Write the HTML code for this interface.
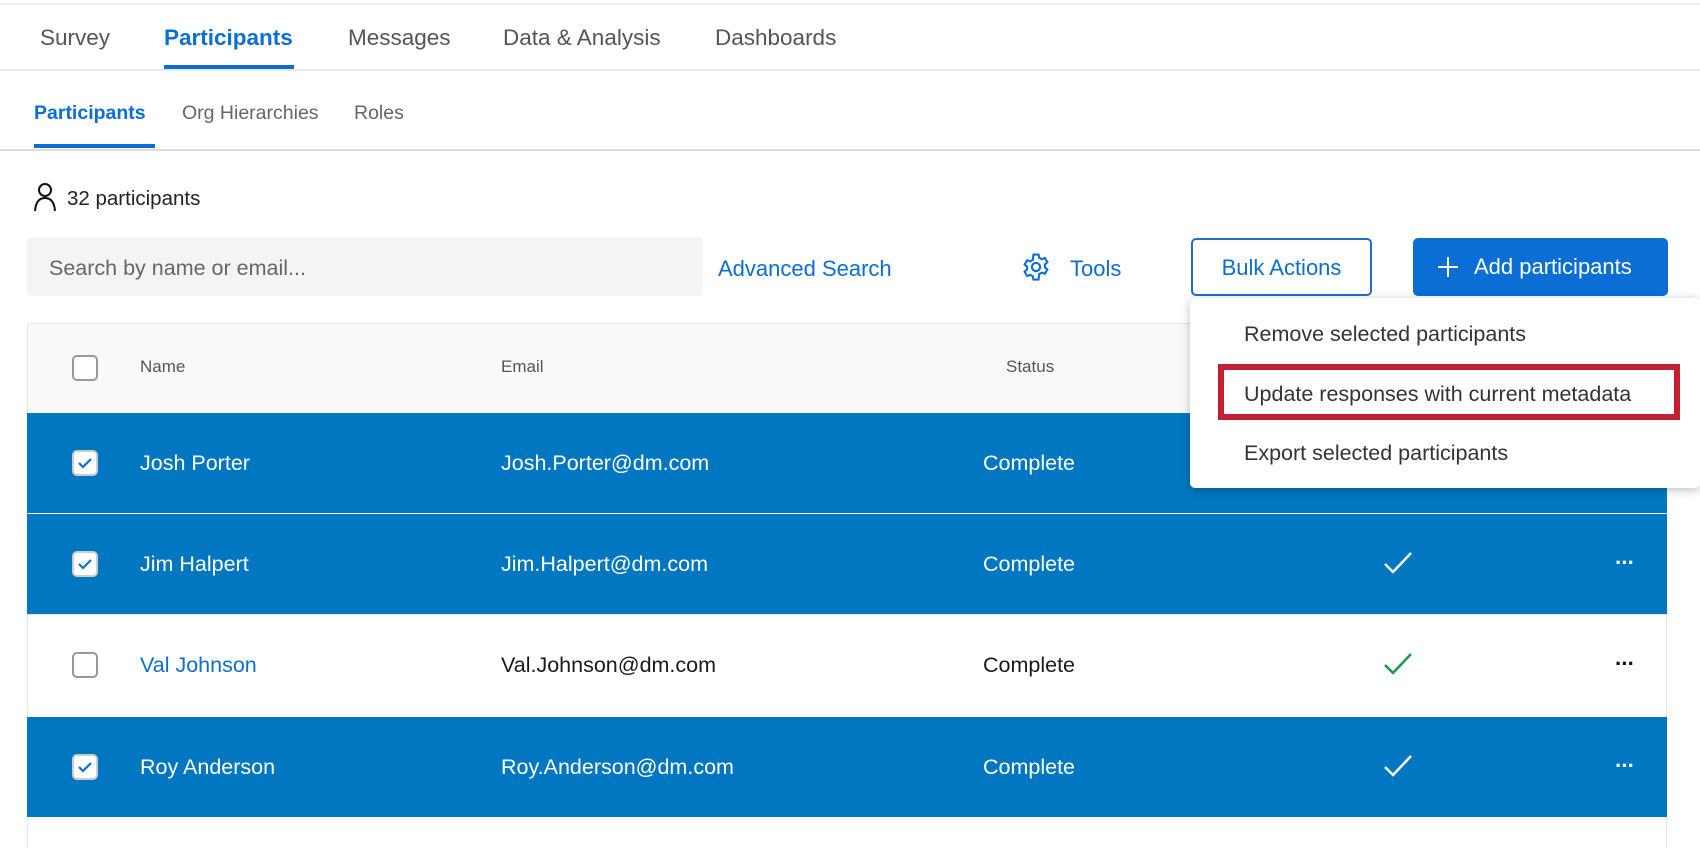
<!DOCTYPE html>
<html><head><meta charset="utf-8"><style>
*{box-sizing:border-box;margin:0;padding:0}
body{width:1700px;height:848px;overflow:hidden;background:#fff;font-family:"Liberation Sans",sans-serif;position:relative;color:#1a1a1a}
.a{position:absolute;white-space:nowrap}
.nav{font-size:22.5px;color:#555;top:25px}
.sub{font-size:19.5px;color:#666;top:102px}
.hd{font-size:17px;color:#555;top:357px}
.row{position:absolute;left:27px;width:1640px;height:100px}
.sel{background:#0077c0;color:#fff}
.cb{position:absolute;left:45px;top:37px;width:26px;height:26px;border-radius:5px;border:2px solid #999;background:#fff}
.cell{position:absolute;top:38px;font-size:21.5px}
.dots{position:absolute;left:1588px;top:36px;font-size:22px;font-weight:bold;letter-spacing:-1px}
.mi{font-size:21.5px;color:#333;left:1244px}
</style></head><body>
<div class="a" style="left:0;top:3px;width:1700px;height:2px;background:#eee"></div>
<div class="a nav" style="left:40px">Survey</div>
<div class="a nav" style="left:164px;color:#0b6ed5;font-weight:bold">Participants</div>
<div class="a nav" style="left:348px">Messages</div>
<div class="a nav" style="left:503px">Data &amp; Analysis</div>
<div class="a nav" style="left:715px">Dashboards</div>
<div class="a" style="left:164px;top:65px;width:130px;height:4px;background:#0b6ed5"></div>
<div class="a" style="left:0;top:69px;width:1700px;height:2px;background:#e8e8e8"></div>
<div class="a sub" style="left:34px;color:#0b6ed5;font-weight:bold">Participants</div>
<div class="a sub" style="left:182px">Org Hierarchies</div>
<div class="a sub" style="left:354px">Roles</div>
<div class="a" style="left:34px;top:144px;width:121px;height:4px;background:#0b6ed5"></div>
<div class="a" style="left:0;top:149px;width:1700px;height:2px;background:#ddd"></div>
<svg class="a" style="left:33px;top:182px" width="24" height="30" viewBox="0 0 24 30"><circle cx="12" cy="8" r="6" fill="none" stroke="#111" stroke-width="2"/><path d="M2 29 Q3 16 12 16 Q21 16 22 29" fill="none" stroke="#111" stroke-width="2"/></svg>
<div class="a" style="left:67px;top:187px;font-size:20.5px;color:#222">32 participants</div>
<div class="a" style="left:27px;top:237px;width:676px;height:59px;background:#f4f4f4;border-radius:4px"></div>
<div class="a" style="left:49px;top:256px;font-size:21.5px;color:#666">Search by name or email...</div>
<div class="a" style="left:718px;top:256px;font-size:22px;color:#0b6ed5">Advanced Search</div>
<svg class="a" style="left:1021px;top:252px" width="30" height="30" viewBox="0 0 24 24"><path fill="none" stroke="#0b6ed5" stroke-width="1.7" d="M10 2h4l.6 2.6 2 1.1 2.5-.9 2 3.4-2 1.8v2.2l2 1.8-2 3.4-2.5-.9-2 1.1L14 22h-4l-.6-2.6-2-1.1-2.5.9-2-3.4 2-1.8V11.8L2.9 10 4.9 6.6l2.5.9 2-1.1z"/><circle cx="12" cy="12" r="3.3" fill="none" stroke="#0b6ed5" stroke-width="1.7"/></svg>
<div class="a" style="left:1070px;top:256px;font-size:22px;color:#0b6ed5">Tools</div>
<div class="a" style="left:1191px;top:238px;width:181px;height:58px;border:2px solid #1f6fc8;border-radius:5px;text-align:center;line-height:56px;font-size:22px;color:#0b6ed5">Bulk Actions</div>
<div class="a" style="left:1413px;top:238px;width:255px;height:58px;background:#0b6ed5;border-radius:5px;color:#fff;font-size:22px;line-height:58px;padding-left:61px">Add participants</div>
<svg class="a" style="left:1437px;top:256px" width="22" height="22"><path d="M11 1v20M1 11h20" stroke="#fff" stroke-width="2"/></svg>
<div class="a" style="left:27px;top:323px;width:1640px;height:525px;border:1px solid #e6e6e6;border-bottom:none"></div>
<div class="a" style="left:28px;top:324px;width:1638px;height:88px;background:#f9f9f9"></div>
<div class="a" style="left:72px;top:355px;width:26px;height:26px;border:2px solid #999;border-radius:5px;background:#fff"></div>
<div class="a hd" style="left:140px">Name</div>
<div class="a hd" style="left:501px">Email</div>
<div class="a hd" style="left:1006px">Status</div>
<div class="row sel" style="top:413px"><div class="cb" style="border-color:#ccc"><svg width="22" height="22" viewBox="0 0 22 22"><path d="M5 11l4 4 8-8" fill="none" stroke="#0b6ed5" stroke-width="2.2"/></svg></div><div class="cell" style="left:113px">Josh Porter</div><div class="cell" style="left:474px">Josh.Porter@dm.com</div><div class="cell" style="left:956px">Complete</div></div>
<div class="row sel" style="top:514px"><div class="cb" style="border-color:#ccc"><svg width="22" height="22" viewBox="0 0 22 22"><path d="M5 11l4 4 8-8" fill="none" stroke="#0b6ed5" stroke-width="2.2"/></svg></div><div class="cell" style="left:113px">Jim Halpert</div><div class="cell" style="left:474px">Jim.Halpert@dm.com</div><div class="cell" style="left:956px">Complete</div>
<svg class="a" style="left:1356px;top:36px" width="30" height="26"><path d="M2 14l8 8L28 3" fill="none" stroke="#fff" stroke-width="2.5"/></svg><div class="dots">···</div></div>
<div class="row" style="top:614px;border-top:1px solid #e6e6e6;height:103px"><div class="cb"></div><div class="cell" style="left:113px;color:#0b6ed5">Val Johnson</div><div class="cell" style="left:474px">Val.Johnson@dm.com</div><div class="cell" style="left:956px">Complete</div>
<svg class="a" style="left:1356px;top:36px" width="30" height="26"><path d="M2 14l8 8L28 3" fill="none" stroke="#1a9a4a" stroke-width="2.5"/></svg><div class="dots" style="color:#111">···</div></div>
<div class="row sel" style="top:717px"><div class="cb" style="border-color:#ccc"><svg width="22" height="22" viewBox="0 0 22 22"><path d="M5 11l4 4 8-8" fill="none" stroke="#0b6ed5" stroke-width="2.2"/></svg></div><div class="cell" style="left:113px">Roy Anderson</div><div class="cell" style="left:474px">Roy.Anderson@dm.com</div><div class="cell" style="left:956px">Complete</div>
<svg class="a" style="left:1356px;top:36px" width="30" height="26"><path d="M2 14l8 8L28 3" fill="none" stroke="#fff" stroke-width="2.5"/></svg><div class="dots">···</div></div>
<div class="a" style="left:1190px;top:298px;width:510px;height:190px;background:#fff;border-radius:5px;box-shadow:0 2px 10px rgba(0,0,0,.25)"></div>
<div class="a mi" style="top:322px">Remove selected participants</div>
<div class="a" style="left:1218px;top:364px;width:462px;height:56px;border:6px solid #c0202f"></div>
<div class="a mi" style="top:382px">Update responses with current metadata</div>
<div class="a mi" style="top:441px">Export selected participants</div>
</body></html>
